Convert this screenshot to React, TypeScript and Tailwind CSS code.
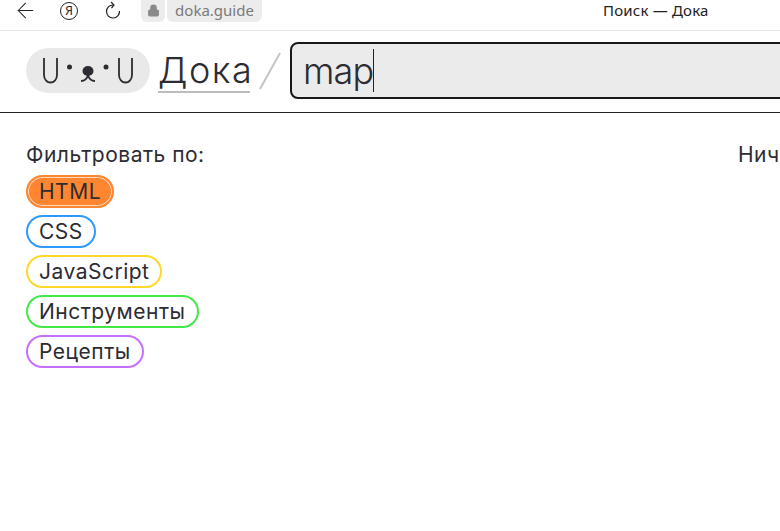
import { ArrowLeft, Lock } from "lucide-react";

// Filter chips, top to bottom
const FILTERS = [
  { label: "HTML", border: "border-[#ff8630]", active: true },
  { label: "CSS", border: "border-[#2e9aff]", active: false },
  { label: "JavaScript", border: "border-[#ffd829]", active: false },
  { label: "Инструменты", border: "border-[#41e847]", active: false },
  { label: "Рецепты", border: "border-[#c56fff]", active: false },
];

function BrowserBar() {
  return (
    <div className="flex h-[31px] items-center border-b border-[#e6e6e6] bg-white pb-[9px] font-['Noto_Sans',sans-serif]">
      <ArrowLeft className="ml-[13px] h-[25px] w-[25px] shrink-0 text-[#222]" strokeWidth={1} />
      <span className="ml-[22px] flex h-[18px] w-[18px] shrink-0 items-center justify-center rounded-full border border-[#222] text-[12px] leading-none text-[#222]">
        Я
      </span>
      <svg width="18" height="20" viewBox="0 0 18 20" className="ml-[26px] shrink-0" fill="none" stroke="#222" strokeWidth="1.2">
        <path d="M9.5 4 A6.5 6.5 0 1 0 15.5 10" />
        <path d="M7 1 L10 4 L7.5 7" />
      </svg>
      <span className="ml-[19px] flex h-[22px] w-[24px] shrink-0 items-center justify-center rounded-b-md bg-[#ececec]">
        <Lock className="h-[13px] w-[13px] fill-[#8a8a8a] text-[#8a8a8a]" strokeWidth={2} />
      </span>
      <span className="ml-[2px] flex h-[22px] w-[95px] shrink-0 items-center justify-center rounded-b-md bg-[#ececec] text-[15px] text-[#7a7a7a]">
        doka.guide
      </span>
      <span className="ml-[341px] w-[130px] shrink-0 text-[15px] tracking-[0.2px] whitespace-nowrap text-[#222]">Поиск — Дока</span>
    </div>
  );
}

// Dog face logo, U•ᴥ•U
function Logo() {
  return (
    <a className="block h-[45px] w-[124px] shrink-0 rounded-full bg-[#e9e9e9]">
      <svg width="124" height="45" viewBox="0 0 124 45" fill="none" stroke="#2c2c32" strokeWidth="1.8">
        <path d="M18 10 V27 a6.5 7.5 0 0 0 13 0 V10" />
        <path d="M93 10 V27 a6.5 7.5 0 0 0 13 0 V10" />
        <circle cx="43.5" cy="19" r="2.5" fill="#2c2c32" stroke="none" />
        <circle cx="80" cy="19" r="2.5" fill="#2c2c32" stroke="none" />
        <ellipse cx="62" cy="23" rx="5.5" ry="5" fill="#2c2c32" stroke="none" />
        <path d="M62 27 C61 31 58 33 55 33 M62 27 C63 31 66 33 69 33" />
      </svg>
    </a>
  );
}

function Header() {
  return (
    <header className="flex h-[82px] items-center border-b border-[#222] pb-[2px] pl-[26px]">
      <Logo />
      <a className="ml-[8px] w-[92px] shrink-0 border-b-2 border-[#bdbdbd] font-['Inter',sans-serif] text-[36px] leading-[42px] font-light tracking-[1.5px] whitespace-nowrap text-[#2c2c32]">
        Дока
      </a>
      <svg width="24" height="40" viewBox="0 0 24 40" className="ml-[8px] shrink-0" fill="none">
        <path d="M22 2 L2 38" stroke="#c4c4c4" strokeWidth="2" />
      </svg>
      <div className="ml-[8px] flex h-[57px] w-[520px] shrink-0 items-center rounded-lg border-2 border-[#18181b] bg-[#ebebeb] pl-[11px]">
        <span className="font-['Inter',sans-serif] text-[36px] leading-none font-light tracking-[-0.8px] text-[#2c2c32]">map</span>
        <span className="h-[43px] w-px bg-[#222]" />
      </div>
    </header>
  );
}

export default function App() {
  return (
    <div className="h-[531px] w-[780px] overflow-hidden bg-white">
      <BrowserBar />
      <Header />
      <main className="flex pt-[29px] pl-[26px] font-['Inter',sans-serif] text-[21px] font-normal tracking-[0.5px] text-[#2c2c32]">
        <section className="w-[712px] shrink-0">
          <p className="leading-[26px]">Фильтровать по:</p>
          <ul className="mt-[7px] flex flex-col items-start gap-[7px]">
            {FILTERS.map((f) => (
              <li
                key={f.label}
                className={`flex h-[33px] items-center rounded-full border-2 px-[11px] leading-none whitespace-nowrap ${f.border} ${
                  f.active ? "bg-[#ff8630] shadow-[inset_0_0_0_1px_#ffd9bd]" : "bg-white"
                }`}
              >
                {f.label}
              </li>
            ))}
          </ul>
        </section>
        <p className="leading-[26px] whitespace-nowrap">Ничего не нашлось</p>
      </main>
    </div>
  );
}
